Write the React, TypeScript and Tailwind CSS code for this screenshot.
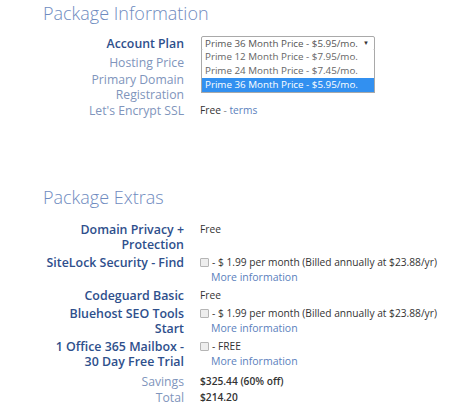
import React from "react";

const F = { fontFamily: '"Open Sans", "Liberation Sans", sans-serif' };

function Label({ children, strong }: { children: React.ReactNode; strong?: boolean }) {
  return (
    <div
      className={
        "w-[184px] shrink-0 text-right " +
        (strong ? "text-[12.4px] font-semibold text-[#2e4f8c]" : "text-[12.2px] font-normal text-[#8095bc]")
      }
    >
      {children}
    </div>
  );
}

function Box() {
  return <span className="inline-block w-[9px] h-[9px] mr-[3px] border border-[#b5b5b5] bg-[#eeeeee] rounded-[1px] align-[-1px]" />;
}

function Row({ label, strong, children, cls }: { label: React.ReactNode; strong?: boolean; children?: React.ReactNode; cls?: string }) {
  return (
    <div className={"flex leading-[15px] " + (cls ?? "mb-[3px]")}>
      <Label strong={strong}>{label}</Label>
      <div className="pl-[16px] text-[10.2px] text-[#333]">{children}</div>
    </div>
  );
}

function More() {
  return <div className="pl-[11px] text-[10.5px] text-[#5b7fbd]">More information</div>;
}

export default function App() {
  return (
    <div style={F} className="w-[474px] h-[412px] bg-white overflow-hidden relative">
      <div className="pl-[43px] pt-[1px] text-[18px] leading-[24px] font-light text-[#6f8bc0]">Package Information</div>
      <div className="mt-[11px]">
        <div className="flex mb-[4px] relative">
          <div className="w-[184px] shrink-0 text-right text-[12.3px] leading-[15px] font-semibold text-[#2e4f8c]">Account Plan</div>
          <div className="pl-[17px] relative">
            <div className="w-[174px] h-[15px] border border-[#a9a9a9] rounded-[2px] text-[9.8px] leading-[13px] text-[#555] pl-[3px] flex items-center justify-between pr-[5px]">
              <span>Prime 36 Month Price - $5.95/mo.</span>
              <span className="text-[6px] text-[#333]">▼</span>
            </div>
            <div className="absolute left-[17px] top-[14px] w-[174px] border border-[#a9a9a9] border-t-0 bg-white text-[9.8px] leading-[14px] text-[#666] z-10">
              <div className="pl-[3px] whitespace-nowrap">Prime 12 Month Price - $7.95/mo.</div>
              <div className="pl-[3px] whitespace-nowrap">Prime 24 Month Price - $7.45/mo.</div>
              <div className="pl-[3px] whitespace-nowrap bg-[#3290f0] text-white">Prime 36 Month Price - $5.95/mo.</div>
            </div>
          </div>
        </div>
        <Row label="Hosting Price" cls="mb-[2px]"></Row>
        <Row label={<>Primary Domain<br />Registration</>} cls="mb-[1px]"></Row>
        <Row label="Let's Encrypt SSL">
          Free <span className="text-[#888]">-</span> <span className="text-[#5b7fbd]">terms</span>
        </Row>
      </div>

      <div className="pl-[43px] mt-[67px] text-[18px] leading-[24px] font-light text-[#6f8bc0]">Package Extras</div>
      <div className="mt-[13px]">
        <Row label={<>Domain Privacy +<br />Protection</>} strong>Free</Row>
        <Row label="SiteLock Security - Find" strong>
          <div><Box />- $ 1.99 per month (Billed annually at $23.88/yr)</div>
          <More />
        </Row>
        <Row label="Codeguard Basic" strong>Free</Row>
        <Row label={<>Bluehost SEO Tools<br />Start</>} strong>
          <div><Box />- $ 1.99 per month (Billed annually at $23.88/yr)</div>
          <More />
        </Row>
        <Row label={<>1 Office 365 Mailbox -<br />30 Day Free Trial</>} strong cls="mb-[5px]">
          <div><Box />- FREE</div>
          <More />
        </Row>
        <Row label="Savings" cls="mb-[1px]">
          <span className="font-semibold">$325.44 (60% off)</span>
        </Row>
        <Row label="Total">
          <span className="font-semibold">$214.20</span>
        </Row>
      </div>
    </div>
  );
}
